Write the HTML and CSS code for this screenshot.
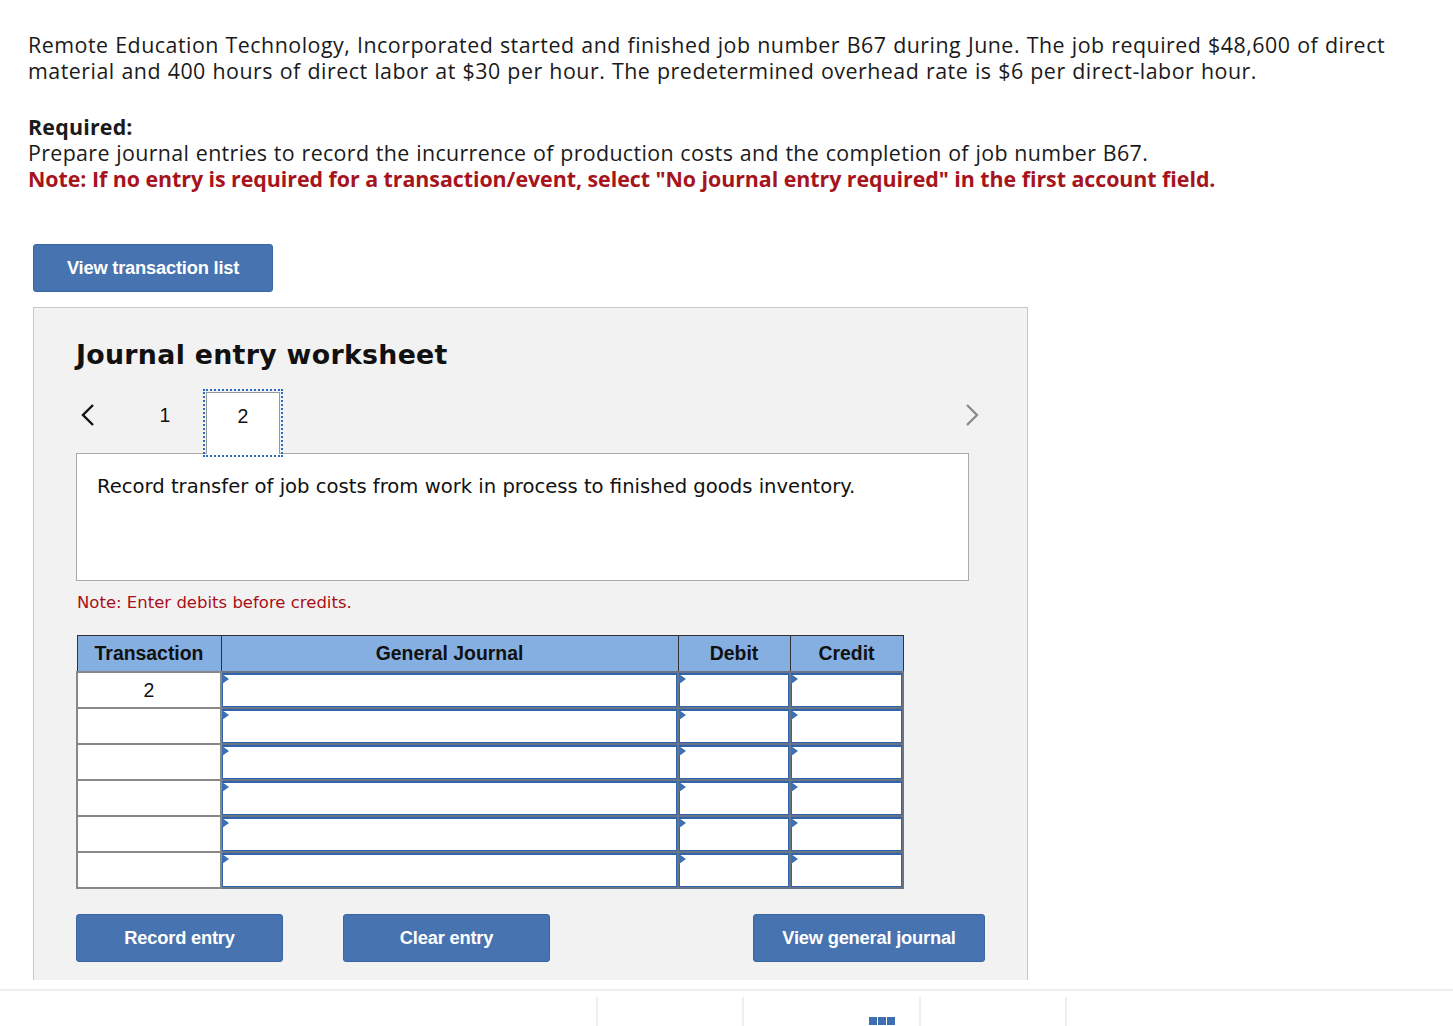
FILE: index.html
```html
<!DOCTYPE html>
<html>
<head>
<meta charset="utf-8">
<link rel="stylesheet" href="styles.css">
</head>
<body>
<div class="page">
  <div class="intro">
    <p class="para first">Remote Education Technology, Incorporated started and finished job number B67 during June. The job required $48,600 of direct material and 400 hours of direct labor at $30 per hour. The predetermined overhead rate is $6 per direct-labor hour.</p>
    <p class="para req"><strong>Required:</strong><br>Prepare journal entries to record the incurrence of production costs and the completion of job number B67.<br><span class="warn">Note: If no entry is required for a transaction/event, select "No journal entry required" in the first account field.</span></p>
  </div>
  <button class="btn btn-list">View transaction list</button>
  <div class="panel">
    <h2 class="title">Journal entry worksheet</h2>
    <div class="nav">
      <span class="chev chev-left"><svg width="16" height="24" viewBox="0 0 16 24"><polyline points="13,2 3,12 13,22" fill="none" stroke="#111" stroke-width="2.4"/></svg></span>
      <span class="tab">1</span>
      <span class="tab tab-active">2</span>
      <span class="spacer"></span>
      <span class="chev chev-right"><svg width="16" height="24" viewBox="0 0 16 24"><polyline points="3,2 13,12 3,22" fill="none" stroke="#888" stroke-width="2.2"/></svg></span>
    </div>
    <div class="desc">Record transfer of job costs from work in process to finished goods inventory.</div>
    <p class="note">Note: Enter debits before credits.</p>
    <table class="journal">
      <thead>
        <tr><th class="c-tr">Transaction</th><th class="c-gj">General Journal</th><th class="c-dr">Debit</th><th class="c-cr">Credit</th></tr>
      </thead>
      <tbody>
        <tr><td class="tr">2</td><td class="in"><div class="box"></div></td><td class="in"><div class="box"></div></td><td class="in"><div class="box"></div></td></tr>
        <tr><td class="tr"></td><td class="in"><div class="box"></div></td><td class="in"><div class="box"></div></td><td class="in"><div class="box"></div></td></tr>
        <tr><td class="tr"></td><td class="in"><div class="box"></div></td><td class="in"><div class="box"></div></td><td class="in"><div class="box"></div></td></tr>
        <tr><td class="tr"></td><td class="in"><div class="box"></div></td><td class="in"><div class="box"></div></td><td class="in"><div class="box"></div></td></tr>
        <tr><td class="tr"></td><td class="in"><div class="box"></div></td><td class="in"><div class="box"></div></td><td class="in"><div class="box"></div></td></tr>
        <tr><td class="tr"></td><td class="in"><div class="box"></div></td><td class="in"><div class="box"></div></td><td class="in"><div class="box"></div></td></tr>
      </tbody>
    </table>
    <div class="actions">
      <button class="btn btn-rec">Record entry</button>
      <button class="btn btn-clr">Clear entry</button>
      <span class="spacer"></span>
      <button class="btn btn-gj">View general journal</button>
    </div>
  </div>
  <div class="footer">
    <div class="fcell f1"></div>
    <div class="fcell f2"><span class="grid3"><i></i><i></i><i></i></span></div>
    <div class="fcell f3"></div>
  </div>
</div>
</body>
</html>
```
FILE: styles.css
```css
html, body { margin: 0; padding: 0; background: #fff; }
body { font-family: "Liberation Sans", Arial, sans-serif; color: #1a1a1a; overflow: hidden; }
.page { width: 1453px; height: 1026px; overflow: hidden; }

.intro { padding: 32px 40px 0 28px; }
.para { margin: 0; font-family: "Open Sans", Lato, sans-serif; font-size: 21.4px; line-height: 26px; color: #1a1a1a; letter-spacing: 0.35px; word-spacing: 0.6px; }
.para.first { letter-spacing: 0.5px; }
.para.req { margin-top: 30px; }
.para strong { font-weight: 700; letter-spacing: 0.2px; }
.warn { color: #a6141c; font-weight: 700; letter-spacing: -0.05px; word-spacing: 0; }

.btn { font-family: "Liberation Sans", Arial, sans-serif; font-weight: 700; font-size: 18.3px; color: #fff; background: #4773b1; border: 1px solid #3b66a6; border-radius: 3px; height: 48px; padding: 0; cursor: pointer; letter-spacing: -0.2px; }
.btn-list { margin: 52px 0 0 33px; width: 240px; display: block; }

.panel { margin: 15px 0 0 33px; width: 993px; height: 672px; background: #f2f2f2; border: 1px solid #c8c8c8; border-bottom: none; box-sizing: content-box; padding: 0; }
.title { margin: 30px 0 0 42px; font-family: "DejaVu Sans", Verdana, sans-serif; font-weight: 700; font-size: 26.8px; line-height: 34px; color: #111; letter-spacing: 0.3px; }

.nav { display: flex; align-items: flex-end; margin: 17px 0 0 42px; width: 897px; height: 64px; }
.chev { display: flex; align-items: flex-start; height: 62px; padding-top: 12px; box-sizing: border-box; }
.chev-left { width: 56px; padding-left: 4px; }
.chev-right { margin-right: -7px; }
.tab { width: 66px; height: 62px; display: flex; align-items: flex-start; justify-content: center; padding-top: 13px; font-family: "Liberation Sans", Arial, sans-serif; font-size: 19.5px; color: #111; box-sizing: border-box; }
.tab-active { width: 74px; margin-left: 8px; background: #fff; border: 1px solid #999; border-bottom: none; outline: 2px dotted #2d6cc0; outline-offset: 1px; position: relative; z-index: 1; height: 62px; margin-bottom: -1px; padding-top: 12px; }
.spacer { flex: 1; }

.desc { margin: 0 0 0 42px; width: 893px; height: 128px; background: #fff; border: 1px solid #aaa; box-sizing: border-box; font-family: "DejaVu Sans", Verdana, sans-serif; font-size: 19.6px; color: #111; padding: 21px 0 0 20px; }
.note { margin: 12px 0 0 43px; font-family: "DejaVu Sans", Verdana, sans-serif; font-size: 16.5px; color: #a80f16; line-height: 20px; }

.journal { margin: 22px 0 0 42px; border-collapse: collapse; width: 827px; table-layout: fixed; }
.journal th { background: #85afe0; border: 1px solid #333; height: 35px; font-family: "Liberation Sans", Arial, sans-serif; font-weight: 700; font-size: 19.4px; color: #111; padding: 0; }
.c-tr { width: 143px; }
.c-gj { width: 456px; }
.c-dr { width: 111px; }
.c-cr { width: 112px; }
.journal td { border: 2px solid #888; background: #fff; height: 32px; padding: 0; }
.journal td.tr { text-align: center; font-size: 19.5px; color: #111; vertical-align: middle; padding-top: 0; }
.journal td.in { background: #fff; border-color: #6b7486; }
.box { position: relative; height: 31px; border: 1px solid #2f64ae; border-top-width: 2px; }
.box::before { content: ""; position: absolute; left: -1px; top: -1px; width: 0; height: 0; border-top: 5px solid transparent; border-bottom: 5px solid transparent; border-left: 7px solid #3a70b8; }

.actions { display: flex; margin: 25px 0 0 42px; width: 909px; }
.btn-rec { width: 207px; }
.btn-clr { width: 207px; margin-left: 60px; }
.btn-gj { width: 232px; }

.footer { margin-top: 9px; border-top: 2px solid #efefef; height: 40px; display: flex; padding-left: 596px; }
.fcell { border-left: 2px solid #efefef; height: 40px; margin-top: 6px; }
.f1 { width: 144px; }
.f2 { width: 175px; position: relative; }
.f3 { width: 144px; border-right: 2px solid #efefef; }
.grid3 { position: absolute; left: 125px; top: 20px; display: flex; gap: 1px; }
.grid3 i { display: block; width: 8px; height: 8px; background: #3f6fb2; }
```
